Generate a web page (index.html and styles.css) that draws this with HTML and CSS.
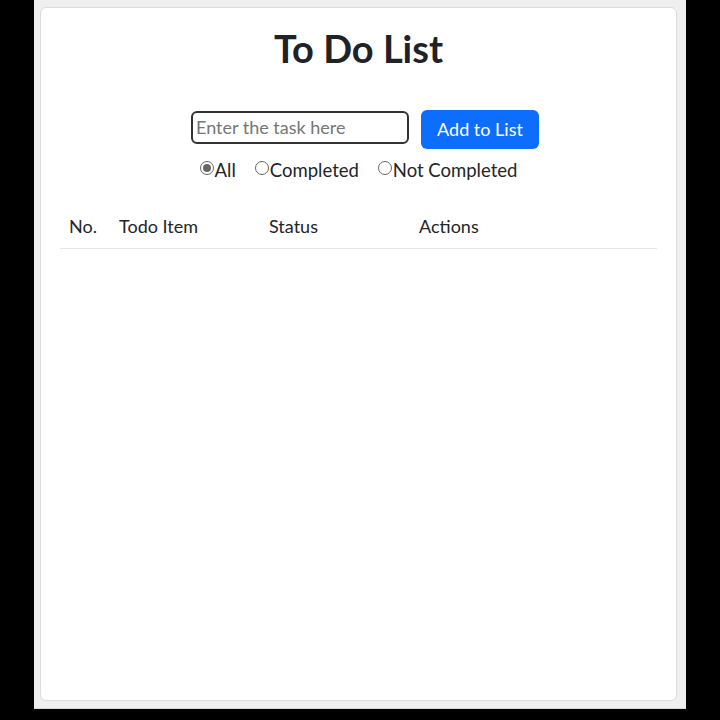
FILE: index.html
```html
<!DOCTYPE html>
<html lang="en">
<head>
<meta charset="utf-8">
<title>To Do List</title>
<link rel="stylesheet" href="styles.css">
</head>
<body>
<div class="frame">
  <main class="card">
    <h1 class="title">To Do List</h1>
    <form class="add-row">
      <input class="task-input" type="text" placeholder="Enter the task here">
      <button class="add-btn" type="button">Add to List</button>
    </form>
    <div class="filters">
      <label class="filter"><span class="radio checked"></span>All</label>
      <label class="filter"><span class="radio"></span>Completed</label>
      <label class="filter"><span class="radio"></span>Not Completed</label>
    </div>
    <table class="todo-table">
      <thead>
        <tr>
          <th class="col-no">No.</th>
          <th class="col-item">Todo Item</th>
          <th class="col-status">Status</th>
          <th class="col-actions">Actions</th>
        </tr>
      </thead>
      <tbody></tbody>
    </table>
  </main>
</div>
</body>
</html>
```

FILE: styles.css
```css
* { box-sizing: border-box; }
html, body { margin: 0; padding: 0; }
body {
  background: #000;
  width: 720px;
  height: 720px;
  overflow: hidden;
  font-family: "Lato", "Noto Sans", sans-serif;
  color: #212529;
}
.frame {
  margin-left: 34px;
  width: 652px;
  height: 709px;
  background: #efefef;
  padding: 7px 9px 7px 6px;
  border-bottom: 1px solid #cfd8cf;
}
.card {
  height: 100%;
  background: #fff;
  border: 1px solid #dcdcdc;
  border-radius: 6px;
  display: flex;
  flex-direction: column;
  align-items: center;
  padding: 0 19px;
}
.title {
  margin: 18px 0 0;
  font-size: 38px;
  font-weight: 700;
  line-height: 1.2;
  color: #1f2226;
}
.add-row {
  margin: 39px 0 0 13px;
  display: flex;
  align-items: flex-start;
  gap: 12px;
}
.task-input {
  width: 218px;
  height: 33px;
  border: 2px solid #333;
  border-radius: 6px;
  padding: 0 3px;
  font: 18px "Lato", "Noto Sans", sans-serif;
  color: #212529;
}
.task-input::placeholder { color: #767676; }
.add-btn {
  width: 118px;
  height: 39px;
  background: #0d6efd;
  color: #fff;
  border: none;
  border-radius: 6px;
  font: 18px "Lato", "Noto Sans", sans-serif;
  padding: 0;
  margin-top: -1px;
}
.filters {
  margin-top: 9px;
  display: flex;
  gap: 19px;
  font-size: 18.5px;
  line-height: 24px;
}
.filter {
  display: flex;
  align-items: center;
}
.radio {
  width: 14px;
  height: 14px;
  border: 1px solid #666;
  border-radius: 50%;
  margin-right: 1px;
  margin-top: -4px;
  position: relative;
  background: #fff;
}
.radio.checked::after {
  content: "";
  position: absolute;
  left: 2px; top: 2px;
  width: 8px; height: 8px;
  border-radius: 50%;
  background: #666;
}
.todo-table {
  align-self: stretch;
  margin-top: 23px;
  border-collapse: collapse;
  width: 100%;
  font-size: 18px;
}
.todo-table th {
  text-align: left;
  font-weight: 400;
  padding: 10px 9px 11px;
  border-bottom: 1px solid #e6e6e6;
}
.col-no { width: 50px; }
.col-item { width: 150px; }
.col-status { width: 150px; }
```
